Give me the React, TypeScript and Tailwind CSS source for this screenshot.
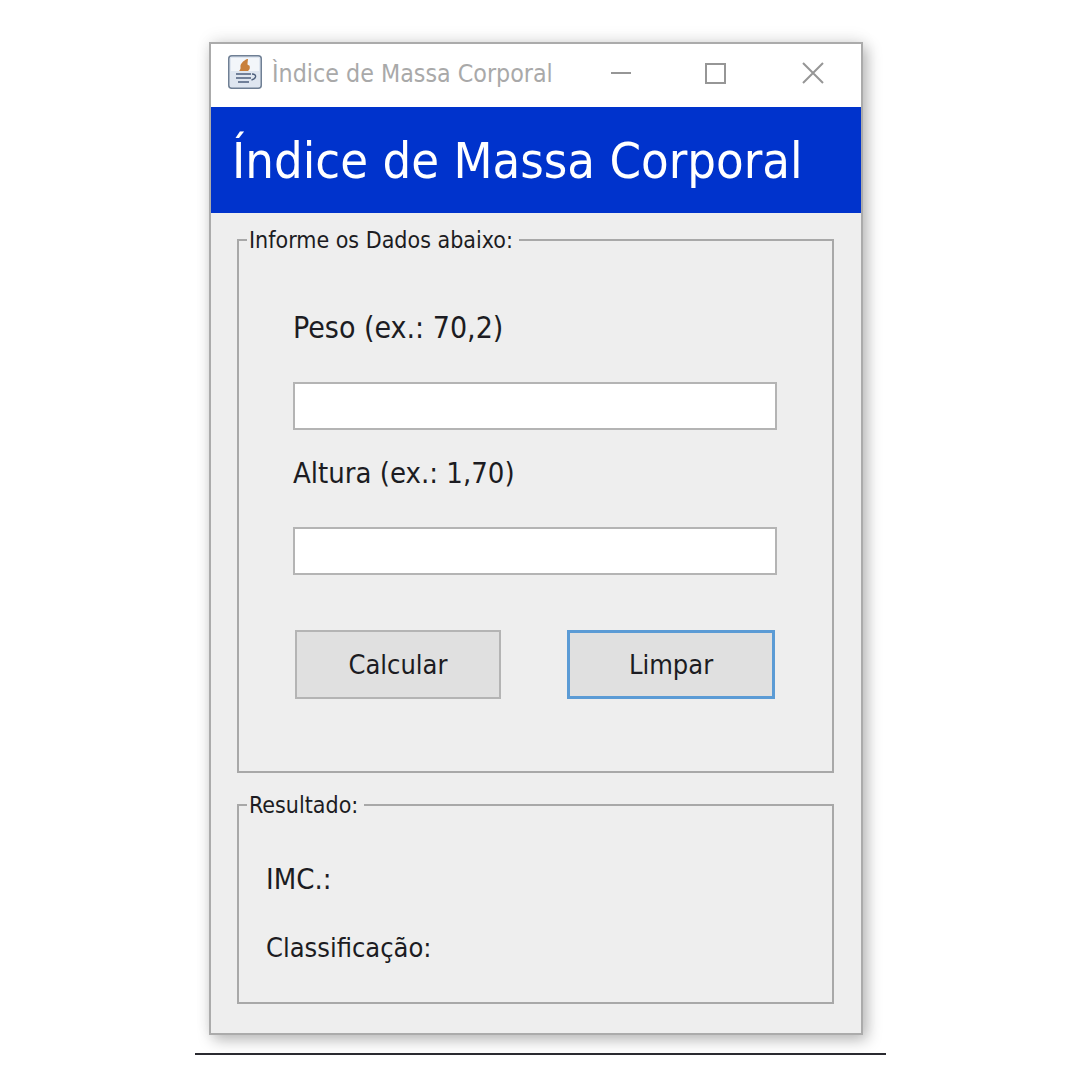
const FONT = "font-['DejaVu_Sans_Condensed','DejaVu_Sans',sans-serif] [font-stretch:condensed]";

function JavaIcon() {
  return (
    <svg width="34" height="34" viewBox="0 0 34 34" className="-mt-[4px] shrink-0">
      <rect x="0.75" y="0.75" width="32.5" height="32.500" rx="3" fill="#dfe6f0" stroke="#6f7f94" strokeWidth="1.5" />
      <rect x="3" y="3" width="28" height="13" fill="#f3f6fa" />
      <path d="M19 4c-4 2-7 5-6.500 8 .3 1.800-.5 3-1.500 4h9c2-1.500 2.500-4 1-6-1 .5-1.500 0-1.500-1.500 0-1.500.5-3 .5-4.500z" fill="#c8803c" />
      <path d="M8 19h15M8 23h15M10 27h11" stroke="#4d5f7c" strokeWidth="1.600" fill="none" />
      <path d="M24 19c3 0 4 1.500 3.500 3s-2 2.500-4 3" stroke="#4d5f7c" strokeWidth="1.300" fill="none" />
    </svg>
  );
}

function TitleBar() {
  return (
    <div className="flex h-[63px] items-center bg-white pb-[3px] pl-[17px]">
      <JavaIcon />
      <span className="ml-[10px] text-[24.75px] leading-none whitespace-nowrap text-[#a9a9a9]">Ìndice de Massa Corporal</span>
      <div className="-mt-[2px] ml-auto flex items-center pr-[37px] text-[#969696]">
        <svg width="22" height="22" viewBox="0 0 22 22" stroke="currentColor" strokeWidth="2" fill="none">
          <path d="M1 11h20" />
        </svg>
        <svg width="21" height="21" viewBox="0 0 21 21" stroke="currentColor" strokeWidth="2" fill="none" className="ml-[73px]">
          <rect x="1" y="1" width="19" height="19" />
        </svg>
        <svg width="22" height="22" viewBox="0 0 22 22" stroke="currentColor" strokeWidth="2" fill="none" className="ml-[76px]">
          <path d="M1 1l20 20M21 1L1 21" />
        </svg>
      </div>
    </div>
  );
}

function Field({ label, labelClass }: { label: string; labelClass: string }) {
  return (
    <div className="flex flex-col">
      <label className={`h-[44px] leading-[44px] whitespace-nowrap text-[#1c1c22] ${labelClass}`}>{label}</label>
      <input className="mt-[32px] h-[48px] w-[484px] border-2 border-[#b4b4b4] bg-white" />
    </div>
  );
}

export default function App() {
  return (
    <div className={`flex h-[1080px] w-[1080px] flex-col items-center overflow-hidden bg-white pt-[42px] ${FONT}`}>
      <div className="mr-[8px] flex h-[993px] w-[654px] shrink-0 flex-col border-2 border-[#ababab] bg-[#eeeeee] shadow-[4px_5px_14px_rgba(0,0,0,0.28),0_-4px_16px_rgba(0,0,0,0.06)]">
        <TitleBar />
        <div className="flex h-[106px] items-center bg-[#0033cc] pt-[2px] pl-[21px] text-[50.3px] leading-none whitespace-nowrap text-white">
          Índice de Massa Corporal
        </div>

        <div className="flex flex-col pt-[14px] pr-[27px] pl-[26px]">
          <fieldset className="h-[546px] border-2 border-[#a8a8a8]">
            <legend className="ml-[8px] pr-[6px] pl-[2px] text-[23px] leading-[26px] whitespace-nowrap text-[#1c1c22]">Informe os Dados abaixo:</legend>
            <div className="pl-[54px]">
              <div className="mt-[53px] flex flex-col gap-[21px]">
                <Field label="Peso (ex.: 70,2)" labelClass="text-[30px]" />
                <Field label="Altura (ex.: 1,70)" labelClass="text-[29px]" />
              </div>
              <div className="mt-[55px] flex w-[482px] justify-between pl-[2px]">
                <button className="h-[69px] w-[206px] border-2 border-[#b4b4b4] bg-[#e0e0e0] pt-[2px] text-[27px] text-[#1c1c22]">Calcular</button>
                <button className="h-[69px] w-[208px] border-[3px] border-[#5b9bd5] bg-[#e0e0e0] pt-[2px] text-[27px] text-[#1c1c22]">Limpar</button>
              </div>
            </div>
          </fieldset>

          <fieldset className="mt-[19px] h-[212px] border-2 border-[#a8a8a8]">
            <legend className="ml-[8px] pr-[6px] pl-[2px] text-[23px] leading-[26px] whitespace-nowrap text-[#1c1c22]">Resultado:</legend>
            <div className="pl-[27px]">
              <div className="mt-[39px] text-[29px] leading-[44px] text-[#1c1c22]">IMC.:</div>
              <div className="mt-[25px] text-[27px] leading-[44px] text-[#1c1c22]">Classificação:</div>
            </div>
          </fieldset>
        </div>
      </div>
      <div className="mt-[18px] h-[2px] w-[691px] shrink-0 bg-[#2a2a30]" />
    </div>
  );
}
